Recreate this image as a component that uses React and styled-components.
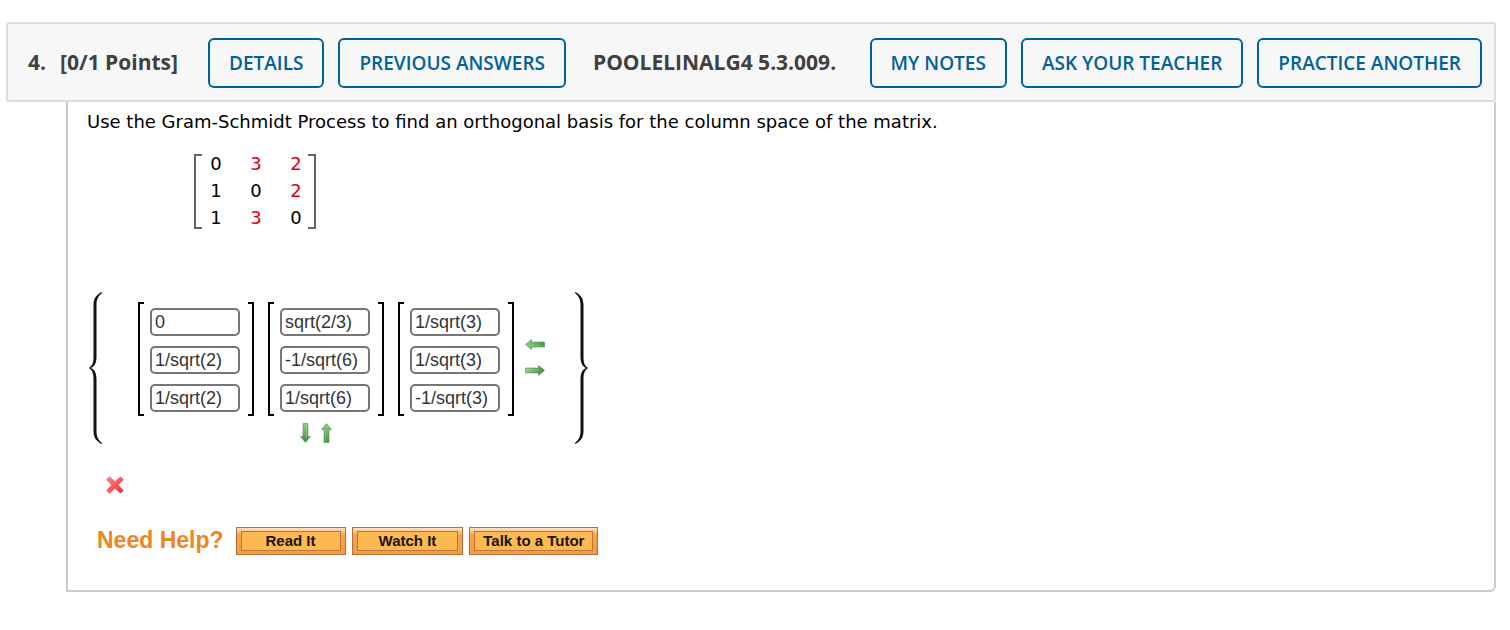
import React from 'react';
import styled, { createGlobalStyle } from 'styled-components';

const GlobalStyle = createGlobalStyle`
  *,
  *::before,
  *::after {
    box-sizing: border-box;
  }
  body {
    margin: 0;
    background-color: #fff;
    color: #000;
    font-family: Verdana, 'DejaVu Sans', sans-serif;
    font-size: 18px;
  }
`;

const Page = styled.main`
  padding: 22px 14px 38px 6px;
`;

const Header = styled.header`
  display: flex;
  align-items: center;
  min-height: 80px;
  padding: 14px 12px 12px 20px;
  background-color: #f7f7f7;
  border: 2px solid #ddd;
  border-radius: 3px;
  color: #404040;
  font-family: 'Open Sans', sans-serif;
`;

const HeaderText = styled.h2`
  margin: 0;
  font-size: 21px;
  font-weight: 700;
  line-height: 32px;
  padding-bottom: 2px;
  white-space: nowrap;
`;

const Points = styled(HeaderText)`
  display: flex;
  gap: 14px;
  margin-right: 30px;
`;

const ButtonGroup = styled.div`
  display: flex;
  gap: 14px;
`;

const Actions = styled(ButtonGroup)`
  margin-left: auto;
`;

const QuestionName = styled(HeaderText)`
  margin-left: 27px;
`;

const HeaderButton = styled.button`
  height: 50px;
  padding: 0 19px;
  background-color: transparent;
  border: 2px solid #006298;
  border-radius: 6px;
  color: #006298;
  cursor: pointer;
  font-family: inherit;
  font-size: 19px;
  font-weight: 600;
  white-space: nowrap;
`;

const Body = styled.section`
  min-height: 490px;
  margin-left: 60px;
  padding: 8px 19px 34px;
  border: 2px solid #ccc;
  border-top: 0;
  border-radius: 0 0 6px 0;
`;

const Prompt = styled.p`
  margin: 0;
  line-height: 24px;
`;

const Bracketed = styled.div`
  display: flex;
  width: fit-content;
  &::before,
  &::after {
    content: '';
    width: ${(p) => p.$lip}px;
    border: 2px solid ${(p) => p.$color};
  }
  &::before {
    border-right: 0;
  }
  &::after {
    border-left: 0;
  }
`;

const GivenMatrix = styled(Bracketed)`
  margin: 20px 0 0 107px;
`;

const Matrix = styled.table`
  margin: -4px -8px -2px -6px;
  border-collapse: collapse;
  td {
    width: 40px;
    height: 27px;
    padding: 0;
    text-align: center;
  }
`;

const Entry = styled.td`
  color: ${(p) => (p.$random ? '#dd0019' : '#000')};
`;

const AnswerSet = styled.div`
  display: flex;
  width: fit-content;
  margin: 63px 0 0 2px;
`;

const Vectors = styled.div`
  display: flex;
  gap: 14px;
  margin: 10px 0 0 35px;
`;

const VectorColumn = styled.div`
  display: flex;
  flex-direction: column;
`;

const Fields = styled.div`
  display: flex;
  flex-direction: column;
  gap: 10px;
  padding: 6px 8px 4px 6px;
`;

const Field = styled.input`
  width: 90px;
  height: 28px;
  padding: 0 3px;
  background-color: #fff;
  border: 2px solid #767676;
  border-radius: 5px;
  color: #333;
  font-family: 'Liberation Sans', Arial, sans-serif;
  font-size: 18px;
`;

const ArrowButton = styled.button`
  display: flex;
  padding: 0;
  background: none;
  border: 0;
  cursor: pointer;
`;

const RowControls = styled.div`
  display: flex;
  gap: 10px;
  margin: 7px 0 0 32px;
`;

const ColumnControls = styled.div`
  display: flex;
  flex-direction: column;
  gap: 15px;
  margin: 47px 29px 0 11px;
`;

const Mark = styled.div`
  height: 18px;
  margin: 32px 0 0 19px;
  line-height: 0;
`;

const Help = styled.div`
  display: flex;
  align-items: center;
  gap: 6px;
  margin: 33px 0 0 10px;
  font-family: 'Liberation Sans', Arial, sans-serif;
`;

const HelpLabel = styled.span`
  margin-right: 6px;
  color: #ee8523;
  font-size: 23px;
  font-weight: 700;
  line-height: 26px;
  padding-bottom: 2px;
`;

const HelpButton = styled.button`
  height: 28px;
  min-width: 110px;
  padding: 3px 4px;
  background: linear-gradient(#fde3cd 0, #fba04a 7px, #f99a41 100%);
  border: 1px solid #b0703a;
  cursor: pointer;
  font-family: inherit;
  font-size: 15px;
  font-weight: 700;
  color: #1c1408;
`;

const HelpFace = styled.span`
  display: block;
  padding: 0 ${(p) => (p.$wide ? 8 : 21)}px;
  background-color: #fbb951;
  border: 1px solid #b9783a;
  line-height: 18px;
  white-space: nowrap;
`;

const matrix = [
  [0, 3, 2],
  [1, 0, 2],
  [1, 3, 0],
];

const answers = [
  ['0', '1/sqrt(2)', '1/sqrt(2)'],
  ['sqrt(2/3)', '-1/sqrt(6)', '1/sqrt(6)'],
  ['1/sqrt(3)', '1/sqrt(3)', '-1/sqrt(3)'],
];

const Brace = ({ right }) => (
  <svg width="14" height="152" viewBox="0 0 14 152" aria-hidden="true">
    <path
      transform={right ? 'translate(14 0) scale(-1 1)' : undefined}
      fill="#111"
      d="M13 0C8 2 4.500 6 4.500 13V64C4.500 70 4 73 0 76C4 79 4.500 82 4.500 88V139C4.500 146 8 150 13 152V151C9.500 148 7.500 145 7.500 139V88C7.500 81 6 78 2 76C6 74 7.500 71 7.500 64V13C7.500 7 9.500 4 13 1Z"
    />
  </svg>
);

const turns = { right: 0, down: 90, left: 180, up: 270 };

// light comes from the top left, so the shading does not turn with the arrow
const Arrow = ({ direction }) => {
  const vertical = direction === 'up' || direction === 'down';
  const forward = direction === 'right' || direction === 'down';
  return (
    <svg
      width={vertical ? 11 : 20}
      height={vertical ? 20 : 11}
      viewBox={vertical ? '-5.5 -10 11 20' : '-10 -5.5 20 11'}
      aria-hidden="true"
    >
      <defs>
        <linearGradient id={`green-${direction}`} x1="0" x2="1">
          <stop offset="0" stopColor={forward ? '#93cf8c' : '#459247'} />
          <stop offset="1" stopColor={forward ? '#3f8a42' : '#8ed085'} />
        </linearGradient>
      </defs>
      <g transform={`rotate(${turns[direction]})`}>
        <path
          d="M-9.500 -2.500H3.500V-5L9.500 0L3.500 5V2.500H-9.500Z"
          fill={`url(#green-${direction})`}
          stroke="#4f9650"
          strokeOpacity="0.6"
        />
        <path d="M-8 -1H4.500" stroke="#bce6b3" strokeOpacity="0.35" />
      </g>
    </svg>
  );
};

const Cross = () => (
  <svg width="18" height="18" viewBox="0 0 18 18" role="img" aria-label="Incorrect">
    <defs>
      <linearGradient id="cross" x1="0" y1="0" x2="1" y2="1">
        <stop offset="0" stopColor="#ff8585" />
        <stop offset="0.5" stopColor="#fa5a5f" />
        <stop offset="1" stopColor="#f0252f" />
      </linearGradient>
    </defs>
    <path
      d="M3.500 1L9 5.700L14.500 1L17.200 3.500L12.300 9L17.200 14.500L14.500 17.200L9 12.300L3.500 17.200L0.800 14.500L5.700 9L0.800 3.500Z"
      fill="url(#cross)"
      stroke="#f4606a"
      strokeWidth="1"
      strokeLinejoin="round"
    />
  </svg>
);

const Vector = ({ values, index, controls }) => (
  <VectorColumn>
    <Bracketed $lip={6} $color="#000">
      <Fields>
        {values.map((value, row) => (
          <Field
            key={row}
            type="text"
            defaultValue={value}
            aria-label={`Vector ${index + 1}, entry ${row + 1}`}
          />
        ))}
      </Fields>
    </Bracketed>
    {controls}
  </VectorColumn>
);

const App = () => (
  <>
    <GlobalStyle />
    <Page>
      <Header>
        <Points>
          <span>4.</span>
          <span>[0/1 Points]</span>
        </Points>
        <ButtonGroup>
          <HeaderButton>DETAILS</HeaderButton>
          <HeaderButton>PREVIOUS ANSWERS</HeaderButton>
        </ButtonGroup>
        <QuestionName>POOLELINALG4 5.3.009.</QuestionName>
        <Actions>
          <HeaderButton>MY NOTES</HeaderButton>
          <HeaderButton>ASK YOUR TEACHER</HeaderButton>
          <HeaderButton>PRACTICE ANOTHER</HeaderButton>
        </Actions>
      </Header>
      <Body>
        <Prompt>
          Use the Gram-Schmidt Process to find an orthogonal basis for the column space of the matrix.
        </Prompt>
        <GivenMatrix $lip={8} $color="#666">
          <Matrix>
            <tbody>
              {matrix.map((row, i) => (
                <tr key={i}>
                  {row.map((n, j) => (
                    <Entry key={j} $random={n > 1}>{n}</Entry>
                  ))}
                </tr>
              ))}
            </tbody>
          </Matrix>
        </GivenMatrix>
        <AnswerSet>
          <Brace />
          <Vectors>
            {answers.map((values, i) => (
              <Vector
                key={i}
                values={values}
                index={i}
                controls={
                  i === 1 && (
                    <RowControls>
                      <ArrowButton aria-label="Add row"><Arrow direction="down" /></ArrowButton>
                      <ArrowButton aria-label="Remove row"><Arrow direction="up" /></ArrowButton>
                    </RowControls>
                  )
                }
              />
            ))}
          </Vectors>
          <ColumnControls>
            <ArrowButton aria-label="Remove column"><Arrow direction="left" /></ArrowButton>
            <ArrowButton aria-label="Add column"><Arrow direction="right" /></ArrowButton>
          </ColumnControls>
          <Brace right />
        </AnswerSet>
        <Mark>
          <Cross />
        </Mark>
        <Help>
          <HelpLabel>Need Help?</HelpLabel>
          <HelpButton><HelpFace>Read It</HelpFace></HelpButton>
          <HelpButton><HelpFace>Watch It</HelpFace></HelpButton>
          <HelpButton><HelpFace $wide>Talk to a Tutor</HelpFace></HelpButton>
        </Help>
      </Body>
    </Page>
  </>
);

export default App;
